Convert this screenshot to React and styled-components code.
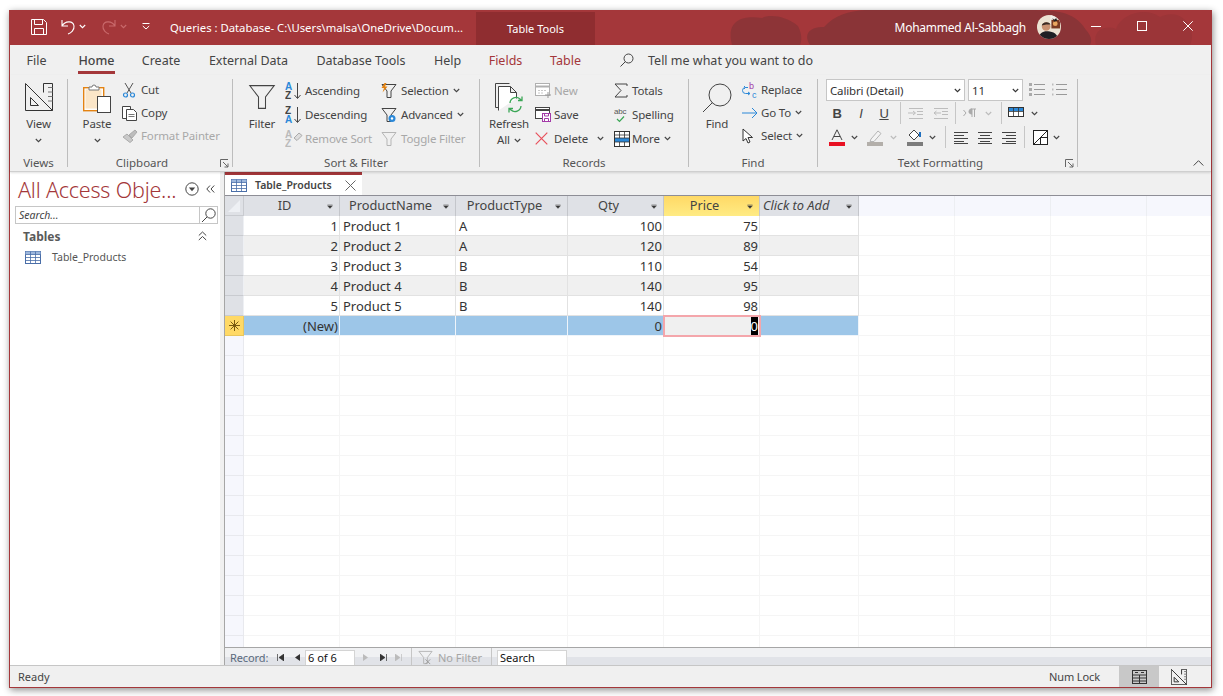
import React from 'react';
import styled, { createGlobalStyle } from 'styled-components';

const GlobalStyle = createGlobalStyle`
  html, body {
    margin: 0;
    padding: 0;
    background: #fff;
    font-family: "Noto Sans", "Open Sans", Arial, sans-serif;
    overflow: hidden;
  }
`;

const Shell = styled.div`
  padding: 10px 0 0 9px;
  height: 696px;
  box-sizing: border-box;
`;

const Window = styled.div`
  width: 1203px;
  height: 678px;
  box-sizing: border-box;
  border: 1px solid #a4373a;
  border-top: 0;
  box-shadow: 1px 2px 7px rgba(0, 0, 0, 0.45);
  display: flex;
  flex-direction: column;
  background: #f0f0f0;
`;

/* title bar */
const TitleBar = styled.div`
  position: relative;
  height: 35px;
  flex: none;
  background: #a4373a;
  color: #fff;
  display: flex;
  align-items: center;
  font-size: 12px;
  overflow: hidden;
`;

const TitleArt = styled.svg`
  position: absolute;
  left: 0;
  top: 0;
`;

const Quick = styled.div`
  position: relative;
  width: ${p => p.$w}px;
  margin-left: ${p => p.$ml || 0}px;
  height: 35px;
  flex: none;
  display: flex;
  align-items: center;
  justify-content: center;
  padding-bottom: ${p => p.$pb || 2}px;
  box-sizing: border-box;
`;

const DocTitle = styled.div`
  position: relative;
  margin-left: 20px;
  width: 298px;
  flex: none;
  font-size: 11.3px;
  white-space: nowrap;
`;

const ContextTab = styled.div`
  position: relative;
  margin-left: 8px;
  align-self: flex-end;
  height: 33px;
  width: 119px;
  flex: none;
  background: #8f2d30;
  display: flex;
  align-items: center;
  justify-content: center;
  font-size: 11px;
`;

const UserName = styled.div`
  position: relative;
  margin-left: auto;
  white-space: nowrap;
  letter-spacing: -0.25px;
`;

const Avatar = styled.svg`
  position: relative;
  margin: 0 0 2px 11px;
  flex: none;
`;

/* tabs */
const TabStrip = styled.div`
  height: 30px;
  flex: none;
  display: flex;
  align-items: center;
  font-size: 12.5px;
  color: #444;
`;

const Tab = styled.div`
  width: ${p => p.$w}px;
  flex: none;
  text-align: center;
  color: ${p => (p.$context ? '#a4373a' : '#444')};
`;

const TabText = styled.span`
  display: inline-block;
  line-height: 21px;
  padding-top: 2px;
  border-bottom: 3px solid ${p => (p.$active ? '#a4373a' : 'transparent')};
  margin-top: 1px;
  font-weight: ${p => (p.$active ? 500 : 400)};
`;

const TellMe = styled.div`
  display: flex;
  align-items: center;
  margin-left: 22px;
  gap: 14px;
`;

/* ribbon */
const Ribbon = styled.div`
  height: 97px;
  flex: none;
  box-sizing: border-box;
  padding-top: 4px;
  display: flex;
  border-bottom: 1px solid #cfcfcf;
  box-shadow: 0 1px 2px rgba(0, 0, 0, 0.12);
  position: relative;
  z-index: 1;
  font-size: 11.5px;
  letter-spacing: -0.15px;
  color: #444;
`;

const Group = styled.div`
  width: ${p => p.$w}px;
  height: 88px;
  flex: none;
  box-sizing: border-box;
  border-right: 1px solid #bdbdbd;
  display: flex;
  flex-direction: column;
`;

const GroupBody = styled.div`
  height: 70px;
  flex: none;
  display: flex;
  flex-direction: ${p => (p.$column ? 'column' : 'row')};
  padding-left: ${p => p.$pl || 0}px;
  justify-content: ${p => (p.$center ? 'center' : 'flex-start')};
`;

const GroupFoot = styled.div`
  position: relative;
  height: 13px;
  margin-top: 5px;
  flex: none;
  box-sizing: border-box;
  padding-right: ${p => p.$pr || 0}px;
  text-align: center;
  font-size: 11.5px;
  letter-spacing: 0;
  line-height: 18px;
  color: #555;
`;

const Launcher = styled.svg`
  position: absolute;
  right: 3px;
  top: 5px;
`;

const Large = styled.div`
  width: 46px;
  flex: none;
  margin-left: ${p => p.$ml || 0}px;
  display: flex;
  flex-direction: column;
  align-items: center;
  padding-top: 4px;
  line-height: 16px;
`;

const LargeIcon = styled.div`
  height: 33px;
  display: flex;
  align-items: flex-start;
`;

const LargeChev = styled.div`
  height: 16px;
  display: flex;
  align-items: center;
  gap: 4px;
`;

const SmallColumn = styled.div`
  width: ${p => p.$w}px;
  margin-left: ${p => p.$ml || 0}px;
  flex: none;
`;

const SmallRow = styled.div`
  height: ${p => p.$h || 24}px;
  padding-bottom: ${p => p.$pb || 1}px;
  box-sizing: border-box;
  display: flex;
  align-items: center;
  white-space: nowrap;
  color: ${p => (p.$off ? '#a8a8a8' : '#444')};
`;

const SmallIcon = styled.div`
  width: ${p => p.$w || 20}px;
  flex: none;
  display: flex;
  align-items: center;
`;

const After = styled.span`
  display: inline-flex;
  margin-left: ${p => p.$ml || 4}px;
`;

const FormatRow = styled.div`
  display: flex;
  align-items: center;
  height: ${p => p.$h || 24}px;
`;

const Combo = styled.div`
  width: ${p => p.$w}px;
  height: 22px;
  margin-right: 3px;
  box-sizing: border-box;
  border: 1px solid #c6c6c6;
  background: #fff;
  display: flex;
  align-items: center;
  justify-content: space-between;
  padding: 0 3px;
  color: #333;
  flex: none;
`;

const Tool = styled.div`
  width: ${p => p.$w}px;
  margin-left: ${p => p.$ml || 0}px;
  height: 22px;
  flex: none;
  display: flex;
  align-items: center;
  justify-content: center;
  color: ${p => p.$color || '#444'};
  font-size: 13px;
  font-family: "Liberation Sans", Arial, sans-serif;
  font-weight: ${p => (p.$bold ? 700 : 400)};
  font-style: ${p => (p.$italic ? 'italic' : 'normal')};
  text-decoration: ${p => (p.$under ? 'underline' : 'none')};
`;

const ToolSep = styled.div`
  width: 1px;
  height: 22px;
  flex: none;
  margin-left: ${p => p.$ml || 0}px;
  background: #c6c6c6;
`;

const CollapseArrow = styled.div`
  margin: auto 7px 5px auto;
`;

/* work area */
const Work = styled.div`
  flex: 1;
  min-height: 0;
  display: flex;
`;

const NavPane = styled.div`
  width: 210px;
  flex: none;
  background: #fff;
  margin-right: 4px;
  display: flex;
  flex-direction: column;
`;

const NavHead = styled.div`
  height: 34px;
  flex: none;
  display: flex;
  align-items: center;
  padding-left: 8px;
  box-sizing: border-box;
`;

const NavTitle = styled.div`
  width: 165px;
  font-size: 21.5px;
  font-weight: 300;
  color: #a4373a;
  white-space: nowrap;
  letter-spacing: -0.2px;
`;

const NavIcons = styled.div`
  display: flex;
  align-items: center;
  margin-left: 2px;
  gap: 7px;
`;

const NavSearch = styled.div`
  margin-left: 5px;
  width: 203px;
  height: 18px;
  flex: none;
  box-sizing: border-box;
  border: 1px solid #c6c6c6;
  display: flex;
  align-items: center;
  justify-content: space-between;
  font-size: 10.5px;
  font-style: italic;
  color: #444;
  padding-left: 3px;
`;

const NavSearchBtn = styled.div`
  width: 17px;
  height: 16px;
  border-left: 1px solid #c6c6c6;
  display: flex;
  align-items: center;
  justify-content: center;
`;

const NavSection = styled.div`
  display: flex;
  align-items: center;
  justify-content: space-between;
  margin-top: 3px;
  height: 18px;
  padding: 0 13px 0 13px;
  font-size: 12px;
  font-weight: 700;
  color: #5a5a5a;
`;

const NavItem = styled.div`
  display: flex;
  align-items: center;
  margin-top: 2px;
  height: 20px;
  padding-left: 15px;
  gap: 11px;
  font-size: 10.5px;
  color: #555;
`;

const Pane = styled.div`
  flex: 1;
  min-width: 0;
  border-left: 1px solid #a6a6a6;
  display: flex;
  flex-direction: column;
`;

const ObjectTabs = styled.div`
  height: 23px;
  flex: none;
  display: flex;
  border-bottom: 1px solid #8e8e96;
`;

const ObjectTab = styled.div`
  width: 137px;
  height: 23px;
  box-sizing: border-box;
  background: #fff;
  border-top: 3px solid #a4373a;
  display: flex;
  align-items: center;
  padding: 0 6px;
  font-size: 10.5px;
  font-weight: 600;
  color: #444;
`;

const ObjectTabName = styled.span`
  margin-left: 8px;
  flex: 1;
`;

/* datasheet */
const Sheet = styled.div`
  flex: 1;
  min-height: 0;
  overflow: hidden;
  background: #fff;
`;

const Row = styled.div`
  display: grid;
  grid-template-columns: 19px 96px 116px 112px 96px 96px 99px 96px 96px 96px 64px;
  height: 20px;
`;

const rowColors = {
  head: { bg: '#dfe1e6', line: '#c9cbd0' },
  white: { bg: '#fff', line: '#e2e2e2' },
  alt: { bg: '#f0f0f0', line: '#e2e2e2' },
  fresh: { bg: '#9dc6e8', line: '#eef4fa' },
  blank: { bg: '#fff', line: '#f5f5f5' },
};

const Cell = styled.div`
  box-sizing: border-box;
  height: 20px;
  line-height: 20px;
  font-size: 13px;
  color: #333;
  white-space: nowrap;
  overflow: hidden;
  padding: ${p => (p.$right ? '0 1px 0 0' : '0 0 0 3px')};
  text-align: ${p => (p.$right ? 'right' : 'left')};
  background: ${p => rowColors[p.$tone].bg};
  border-right: 1px solid ${p => rowColors[p.$tone].line};
  border-bottom: 1px solid ${p => rowColors[p.$tone].line};
`;

const EditCell = styled(Cell)`
  background: #f0f0f0;
  outline: 2px solid #f4a6ab;
  outline-offset: -1px;
  position: relative;
  z-index: 1;
`;

const Caret = styled.span`
  background: #000;
  color: #fff;
`;

const Selector = styled.div`
  box-sizing: border-box;
  height: 20px;
  background: ${p => p.$bg || '#dfe1e6'};
  border-right: 1px solid ${p => p.$line || '#eef0f4'};
  border-bottom: 1px solid ${p => p.$line || '#c9cbd0'};
  display: flex;
  align-items: center;
  justify-content: center;
`;

const Head = styled.div`
  box-sizing: border-box;
  height: 20px;
  display: flex;
  align-items: center;
  justify-content: ${p => (p.$left ? 'flex-start' : 'center')};
  position: relative;
  padding: ${p => (p.$left ? '0 0 2px 3px' : '0 14px 2px 0')};
  background: ${p => (p.$hot ? 'linear-gradient(#ffd966, #ffeb84)' : '#dfe1e6')};
  border-right: 1px solid #c4c6cb;
  font-size: 12.8px;
  color: #444;
  font-style: ${p => (p.$left ? 'italic' : 'normal')};
  white-space: nowrap;
`;

const HeadArrow = styled.svg`
  position: absolute;
  right: 6px;
  top: 8px;
`;

const HeadBlank = styled.div`
  background: #f6f7fd;
  border-right: 1px solid #eceef2;
`;

/* record navigator */
const RecordBar = styled.div`
  height: 17px;
  flex: none;
  border-top: 1px solid #a6a6a6;
  background: linear-gradient(#f0f1f3 50%, #e1e3e8 50%);
  display: flex;
  align-items: center;
  font-size: 11px;
  color: #5a6a7d;
  padding-left: 5px;
`;

const RecordLabel = styled.span`
  width: 39px;
  padding-top: 2px;
  white-space: nowrap;
  letter-spacing: -0.1px;
`;

const NavGlyph = styled.div`
  width: ${p => p.$w}px;
  flex: none;
  display: flex;
  justify-content: center;
  padding-top: 1px;
`;

const RecordBox = styled.div`
  width: ${p => p.$w}px;
  height: 15px;
  flex: none;
  margin-left: ${p => p.$ml || 0}px;
  box-sizing: border-box;
  background: #fff;
  border: 1px solid #d4d4d4;
  border-bottom: 0;
  padding-left: 2px;
  line-height: 14px;
  color: #111;
  align-self: flex-end;
`;

const RecordSep = styled.div`
  width: 1px;
  height: 17px;
  flex: none;
  margin-left: ${p => p.$ml || 0}px;
  background: #c6c6c6;
`;

const NoFilter = styled.div`
  display: flex;
  align-items: center;
  gap: 5px;
  margin-left: 6px;
  width: 73px;
  padding-top: 2px;
  box-sizing: border-box;
  color: #a6a6a6;
`;

/* status bar */
const StatusBar = styled.div`
  height: 21px;
  flex: none;
  border-top: 1px solid #c6c6c6;
  display: flex;
  align-items: center;
  font-size: 11px;
  color: #444;
  padding-left: 8px;
`;

const NumLock = styled.div`
  margin-left: auto;
  margin-right: 19px;
  letter-spacing: -0.1px;
`;

const ViewBtn = styled.div`
  width: 40px;
  height: 21px;
  flex: none;
  display: flex;
  align-items: center;
  justify-content: center;
  background: ${p => (p.$on ? '#c8c8c8' : 'transparent')};
`;

const StatusTail = styled.div`
  width: 12px;
  flex: none;
`;

const Ico = styled.svg`
  display: block;
  flex: none;
`;

const Chev = ({ c = '#444', w = 7 }) => (
  <Ico width={w} height="5" viewBox="0 0 7 5"><path d="M.8 1l2.7 2.7L6.2 1" fill="none" stroke={c} strokeWidth="1.1" /></Ico>
);

const Funnel = ({ s = 16, c = '#444', children }) => (
  <Ico width={s} height={s} viewBox="0 0 16 16">
    <path d="M1 1.5h14L10 8v6.5H6V8z" fill="none" stroke={c} strokeWidth={s > 20 ? 0.6 : 1} />
    {children}
  </Ico>
);

const GridIcon = ({ c = '#4a6ea8' }) => (
  <Ico width="16" height="13" viewBox="0 0 16 13">
    <rect x=".5" y=".5" width="15" height="12" fill="#fff" stroke={c} />
    <path d="M.5 .5h15v3h-15z" fill="#9db7dc" />
    <path d="M.5 3.5h15M.5 6.5h15M.5 9.5h15M5.5 .5v12M10.5 .5v12" stroke={c} strokeWidth=".8" fill="none" />
  </Ico>
);

const GroupLauncher = () => (
  <Launcher width="9" height="9" viewBox="0 0 9 9">
    <path d="M.5 8V.5H8M3 3l5 5M8 4.5V8H4.5" fill="none" stroke="#666" />
  </Launcher>
);

const ViewIcon = ({ s = 28, sw = 1 }) => (
  <Ico width={s} height={s} viewBox="0 0 28 28">
    <path d="M.5 .5l27 27H.5z" fill="none" stroke="#333" strokeWidth={sw} />
    <path d="M5.5 14.5l8 8h-8z" fill="none" stroke="#333" strokeWidth={sw} />
    <path d="M18.5 9.5V.5h9v27" fill="none" stroke="#333" strokeWidth={sw} />
    <path d="M23 4.5h4.5M23 9h4.5M23 13.5h4.5M23 18h4.5" stroke="#777" strokeWidth={sw} />
  </Ico>
);

const PasteIcon = () => (
  <Ico width="28" height="30" viewBox="0 0 28 30">
    <rect x=".7" y="4.7" width="20" height="23" fill="#fff" stroke="#e48312" strokeWidth="1.4" />
    <rect x="2.5" y="6.5" width="16" height="19" fill="#fbe6c8" />
    <path d="M6 6V4h3a2 2 0 0 1 4 0h3v3H6z" fill="#fff" stroke="#777" />
    <rect x="14.5" y="13.5" width="13" height="16" fill="#fff" stroke="#444" />
  </Ico>
);

const CutIcon = () => (
  <Ico width="14" height="16" viewBox="0 0 14 16">
    <path d="M3 1l6 10M11 1L5 11" stroke="#555" strokeWidth="1" fill="none" />
    <circle cx="3.5" cy="13" r="2" fill="none" stroke="#2b88d8" strokeWidth="1.2" />
    <circle cx="10.5" cy="13" r="2" fill="none" stroke="#2b88d8" strokeWidth="1.2" />
  </Ico>
);

const CopyIcon = () => (
  <Ico width="16" height="16" viewBox="0 0 16 16">
    <path d="M4.5 13.5h-4v-12h8v3" fill="#fff" stroke="#444" />
    <path d="M4.5 4.5h7l3 3v8h-10z" fill="#fff" stroke="#444" />
    <path d="M6.5 9.5h6M6.5 11.5h6" stroke="#777" />
  </Ico>
);

const PainterIcon = () => (
  <Ico width="16" height="14" viewBox="0 0 16 14">
    <path d="M1 8l4-3 6 6-3 2.5z" fill="#c9c9c9" stroke="#aaa" />
    <path d="M7 6l6-5 2 2-5 6z" fill="#bdbdbd" stroke="#aaa" />
  </Ico>
);

const SortText = styled.text`
  font-family: "Liberation Sans", Arial, sans-serif;
  font-weight: 700;
  font-size: 10px;
`;

const SortIcon = ({ top, bottom, topColor, bottomColor, off, arrow = true }) => (
  <Ico width="19" height="18" viewBox="0 0 19 18">
    <SortText x="0" y="8" fill={topColor}>{top}</SortText>
    <SortText x="0" y="17" fill={bottomColor}>{bottom}</SortText>
    {arrow ? <path d="M12.5 1v15M9.5 13l3 3.5 3-3.5" stroke="#444" fill="none" /> : null}
    {off ? <path d="M9 8l5-5 3 2.5-5 5z" fill="#ddd" stroke="#aaa" /> : null}
  </Ico>
);

const RefreshIcon = () => (
  <Ico width="28" height="31" viewBox="0 0 28 31">
    <path d="M4.5 24.5H.5V.5h14" fill="none" stroke="#444" />
    <path d="M3.5 27.5V3.5h12l6 6v6M15.5 3.5v6h6" fill="#fff" stroke="#444" />
    <path d="M15 20a6 6 0 0 1 10-4l1.5 1.5M27 13.5v4h-4M26 23a6 6 0 0 1-10 4l-1.5-1.5M14 29.5v-4h4" fill="none" stroke="#3aa655" strokeWidth="1.3" />
  </Ico>
);

const NewRecIcon = () => (
  <Ico width="17" height="15" viewBox="0 0 17 15">
    <rect x=".5" y=".5" width="14" height="12" fill="#fff" stroke="#b0b0b0" />
    <path d="M.5 3.5h14" stroke="#b0b0b0" strokeWidth="2" />
    <path d="M3 7.5h8M3 10h5" stroke="#c8c8c8" strokeDasharray="2 1" />
    <path d="M13 9v6M10 12h6" stroke="#999" />
  </Ico>
);

const SaveRecIcon = () => (
  <Ico width="17" height="15" viewBox="0 0 17 15">
    <rect x=".5" y=".5" width="14" height="11" fill="#fff" stroke="#444" />
    <path d="M.5 3h14" stroke="#444" strokeWidth="2" />
    <rect x="7.5" y="6.5" width="8" height="8" fill="#fff" stroke="#a33ba8" />
    <path d="M9.5 6.5v2.5h4V6.5M9.5 14.5v-3h4v3" fill="none" stroke="#a33ba8" />
  </Ico>
);

const SigmaIcon = () => (
  <Ico width="14" height="15" viewBox="0 0 14 15">
    <path d="M13 3V1H1l6 6.5L1 14h12v-2" fill="none" stroke="#444" />
  </Ico>
);

const SpellIcon = () => (
  <Ico width="16" height="16" viewBox="0 0 16 16">
    <text x="0" y="7" fontSize="8" fontFamily="Liberation Sans, sans-serif" fill="#555">abc</text>
    <path d="M3 12l2.5 2.5L10 9.5" fill="none" stroke="#3aa655" strokeWidth="1.2" />
  </Ico>
);

const MoreIcon = () => (
  <Ico width="16" height="16" viewBox="0 0 16 16">
    <rect x=".5" y=".5" width="15" height="15" fill="#fff" stroke="#333" />
    <rect x="1" y="7" width="14" height="4" fill="#2b88d8" />
    <path d="M.5 4h15M.5 7h15M.5 11h15M5.5 .5V7M10.5 .5V7M5.5 11v4.5M10.5 11v4.5" stroke="#333" strokeWidth=".8" fill="none" />
  </Ico>
);

const FindIcon = () => (
  <Ico width="30" height="30" viewBox="0 0 30 30">
    <circle cx="18" cy="12" r="11" fill="none" stroke="#444" />
    <path d="M1 29l9.5-9.5" stroke="#444" />
  </Ico>
);

const ReplaceIcon = () => (
  <Ico width="16" height="16" viewBox="0 0 16 16">
    <text x="7" y="7" fontSize="9" fontFamily="Liberation Sans, sans-serif" fill="#a33ba8">b</text>
    <text x="10" y="15.5" fontSize="9" fontFamily="Liberation Sans, sans-serif" fill="#2b88d8">c</text>
    <path d="M6 5.5H3.5a2.5 2.5 0 0 0 0 6H8M2 4l1.5 1.5L2 7M6 10l2 1.5L6 13" fill="none" stroke="#2b88d8" />
  </Ico>
);

const GoToIcon = () => (
  <Ico width="16" height="12" viewBox="0 0 16 12">
    <path d="M0 6h15M10 1l5 5-5 5" fill="none" stroke="#2b88d8" />
  </Ico>
);

const SelectIcon = () => (
  <Ico width="12" height="16" viewBox="0 0 12 16">
    <path d="M1 1v12l3-2.5 2 4.5 2-1-2-4.5h4.5z" fill="#fff" stroke="#333" />
  </Ico>
);

const BulletIcon = ({ numbered }) => (
  <Ico width="16" height="14" viewBox="0 0 16 14">
    {numbered ? (
      <path d="M1 1.5h2M1 6.5h2M1 11.5h2" stroke="#bbb" strokeWidth="2" strokeDasharray="1 .5" />
    ) : (
      <path d="M0 1.5h3M0 6.5h3M0 11.5h3" stroke="#aaa" strokeWidth="3" />
    )}
    <path d="M5 1.5h11M5 6.5h11M5 11.5h11" stroke="#999" />
  </Ico>
);

const IndentIcon = ({ back }) => (
  <Ico width="15" height="11" viewBox="0 0 15 11">
    <path d="M1 .5h14M9 3.5h6M9 6.5h6M1 10.5h14" stroke="#bdbdbd" />
    <path d={back ? 'M8 5H1M3.5 3L1 5l2.5 2' : 'M0 5h7M5 3l2.5 2L5 7'} stroke="#bdbdbd" fill="none" />
  </Ico>
);

const ParaIcon = () => (
  <Ico width="13" height="10" viewBox="0 0 13 10">
    <path d="M.5 2l2.5 3-2.5 3" fill="none" stroke="#aaa" />
    <path d="M8 1h5M9 1v8M11.5 1v8M9 1a2.5 2.5 0 0 0-1 5h1" fill="#aaa" stroke="#aaa" />
  </Ico>
);

const GridlineIcon = () => (
  <Ico width="16" height="12" viewBox="0 0 16 12">
    <rect x=".5" y=".5" width="15" height="9" fill="#fff" stroke="#333" />
    <rect x="1" y="1" width="14" height="3" fill="#2b88d8" />
    <path d="M5.5 .5v9M10.5 .5v9M.5 4.5h15" stroke="#333" strokeWidth=".8" />
  </Ico>
);

const TextColorIcon = () => (
  <Ico width="16" height="17" viewBox="0 0 16 17">
    <path d="M3 11L8 .8 13 11M5 7.5h6" fill="none" stroke="#444" />
    <rect x="0" y="13" width="16" height="4" fill="#e81123" />
  </Ico>
);

const HighlightIcon = () => (
  <Ico width="16" height="17" viewBox="0 0 16 17">
    <path d="M4 10L11 2l3 2.5-7 8H3z" fill="#f4f4f4" stroke="#b5b5b5" />
    <rect x="0" y="13" width="16" height="4" fill="#b3afaa" />
  </Ico>
);

const FillIcon = () => (
  <Ico width="16" height="17" viewBox="0 0 16 17">
    <path d="M7 1l5 5-5 5-5-5z" fill="#fff" stroke="#444" />
    <path d="M13 3v5" stroke="#1f6fbf" strokeWidth="2" />
    <rect x="0" y="13" width="16" height="4" fill="#7c7c7c" />
  </Ico>
);

const AlignIcon = ({ side }) => {
  const short = side === 'left' ? 'M0 4.5h10M0 10.5h10' : side === 'right' ? 'M4 4.5h10M4 10.5h10' : 'M2 4.5h10M2 10.5h10';
  return (
    <Ico width="14" height="13" viewBox="0 0 14 13">
      <path d={`M0 1.5h14M0 7.5h14M0 12.5h14 ${short}`} stroke="#444" fill="none" />
    </Ico>
  );
};

const BorderIcon = () => (
  <Ico width="15" height="15" viewBox="0 0 15 15">
    <rect x=".5" y=".5" width="14" height="14" fill="#fff" stroke="#222" />
    <path d="M.5 14.5l14-14M7.5 14.5v-7h7" fill="none" stroke="#222" />
  </Ico>
);

const WinMin = () => <Ico width="10" height="10" viewBox="0 0 10 10"><path d="M0 5.5h10" stroke="#fff" /></Ico>;
const WinMax = () => <Ico width="10" height="10" viewBox="0 0 10 10"><rect x=".5" y=".5" width="9" height="9" fill="none" stroke="#fff" /></Ico>;
const WinClose = () => <Ico width="10" height="10" viewBox="0 0 10 10"><path d="M.3 .3l9.4 9.4M9.7 .3L.3 9.7" stroke="#fff" /></Ico>;

const Triangle = ({ dir = 'right', c = '#444' }) => (
  <Ico width="5" height="7" viewBox="0 0 5 7">
    <path d={dir === 'right' ? 'M0 0l5 3.5L0 7z' : 'M5 0L0 3.5 5 7z'} fill={c} />
  </Ico>
);

const EndMark = ({ dir, c }) => (
  <Ico width="7" height="7" viewBox="0 0 7 7">
    {dir === 'left' ? <path d="M.5 0v7M7 0L2 3.5 7 7z" fill={c} stroke={c} strokeWidth=".7" /> : <path d="M6.5 0v7M0 0l5 3.5L0 7z" fill={c} stroke={c} strokeWidth=".7" />}
  </Ico>
);

const rows = [
  [1, 'Product 1', 'A', 100, 75],
  [2, 'Product 2', 'A', 120, 89],
  [3, 'Product 3', 'B', 110, 54],
  [4, 'Product 4', 'B', 140, 95],
  [5, 'Product 5', 'B', 140, 98],
];

const heads = ['ID', 'ProductName', 'ProductType', 'Qty'];
const blankRows = Array.from({ length: 16 }, (_, i) => i);
const blankCols = Array.from({ length: 10 }, (_, i) => i);

const HeaderArrow = () => (
  <HeadArrow width="6" height="5" viewBox="0 0 7 5">
    <path d="M.5 .3h6M.5 1.5h6L3.5 4.8z" fill="#333" stroke="#555" strokeWidth=".4" />
  </HeadArrow>
);

export default function App() {
  return (
    <Shell>
      <GlobalStyle />
      <Window>
        <TitleBar>
          <TitleArt width="1201" height="35" viewBox="0 0 1201 35">
            <path d="M722 35C716 12 730 5 752 8c8-4 24-2 36 8 4 8 4 14 2 19z" fill="#8d3437" />
            <path d="M800 35c-8-12 2-19 14-18 16-18 40-18 70-17h130c30 0 50 0 62 20 6 7 6 11 4 15z" fill="#8a3437" />
            <path d="M1086 35c-4-16 10-20 20-16 6-16 30-22 44-12 8-4 18-4 24 2 8 8 10 18 6 26z" fill="#9b3538" />
          </TitleArt>
          <Quick $w={16} $ml={21}>
            <Ico width="16" height="16" viewBox="0 0 16 16">
              <path d="M.5 .5h12l3 3v12H.5zM3.5 .5v5h8v-5M3.5 15.5v-6h9v6" fill="none" stroke="#fff" />
            </Ico>
          </Quick>
          <Quick $w={18} $ml={12}>
            <Ico width="16" height="16" viewBox="0 0 16 16">
              <path d="M2 1v6h6M2 7c3-5 11-6 12 0 .5 4-3 7-6 8" fill="none" stroke="#fff" strokeWidth="1.1" />
            </Ico>
          </Quick>
          <Quick $w={7} $ml={2}><Chev c="#fff" /></Quick>
          <Quick $w={18} $ml={14}>
            <Ico width="16" height="16" viewBox="0 0 16 16">
              <path d="M14 1v6H8M14 7C11 2 3 1 2 7c-.5 4 3 7 6 8" fill="none" stroke="#c96a6c" strokeWidth="1.1" />
            </Ico>
          </Quick>
          <Quick $w={7} $ml={2}><Chev c="#c96a6c" /></Quick>
          <Quick $w={9} $ml={14}>
            <Ico width="8" height="7" viewBox="0 0 8 7">
              <path d="M.5 .5h7M.8 3l3.2 3 3.2-3" fill="none" stroke="#fff" />
            </Ico>
          </Quick>
          <DocTitle>Queries : Database- C:\Users\malsa\OneDrive\Docum...</DocTitle>
          <ContextTab>Table Tools</ContextTab>
          <UserName>Mohammed Al-Sabbagh</UserName>
          <Avatar width="24" height="24" viewBox="0 0 25 25">
            <defs><clipPath id="av"><circle cx="12.5" cy="12.5" r="12.5" /></clipPath></defs>
            <g clipPath="url(#av)">
              <rect width="25" height="25" fill="#ece3d3" />
              <rect x="14" y="0" width="11" height="9" fill="#f2efe9" />
              <rect x="15" y="5" width="9" height="9" fill="#7a3b22" />
              <circle cx="19" cy="9" r="2.5" fill="#e9a860" />
              <path d="M16 3l2 2 2-2 1 3-3 1z" fill="#222" />
              <circle cx="9.5" cy="12" r="4.5" fill="#c99272" />
              <path d="M5 11c0-4 8-5 9-1-3 0-6 0-9 1z" fill="#3a2b25" />
              <path d="M2 25c0-6 4-8 8-8s11 1 12 8z" fill="#1e1f24" />
            </g>
          </Avatar>
          <Quick $w={46} $ml={12} $pb={3}><WinMin /></Quick>
          <Quick $w={46} $pb={3}><WinMax /></Quick>
          <Quick $w={46} $pb={3}><WinClose /></Quick>
        </TitleBar>

        <TabStrip>
          <Tab $w={53}><TabText>File</TabText></Tab>
          <Tab $w={67}><TabText $active>Home</TabText></Tab>
          <Tab $w={62}><TabText>Create</TabText></Tab>
          <Tab $w={113}><TabText>External Data</TabText></Tab>
          <Tab $w={112}><TabText>Database Tools</TabText></Tab>
          <Tab $w={61}><TabText>Help</TabText></Tab>
          <Tab $w={55} $context><TabText>Fields</TabText></Tab>
          <Tab $w={65} $context><TabText>Table</TabText></Tab>
          <TellMe>
            <Ico width="14" height="14" viewBox="0 0 14 14">
              <circle cx="8.5" cy="5.5" r="4.5" fill="none" stroke="#444" />
              <path d="M.5 13.5l5-5" stroke="#444" />
            </Ico>
            Tell me what you want to do
          </TellMe>
        </TabStrip>

        <Ribbon>
          <Group $w={58}>
            <GroupBody $center>
              <Large>
                <LargeIcon><ViewIcon /></LargeIcon>
                View
                <LargeChev><Chev /></LargeChev>
              </Large>
            </GroupBody>
            <GroupFoot>Views</GroupFoot>
          </Group>

          <Group $w={165}>
            <GroupBody>
              <Large $ml={6}>
                <LargeIcon><PasteIcon /></LargeIcon>
                Paste
                <LargeChev><Chev /></LargeChev>
              </Large>
              <SmallColumn $w={110} $ml={2}>
                <SmallRow $h={23} $pb={2}><SmallIcon $w={19}><CutIcon /></SmallIcon>Cut</SmallRow>
                <SmallRow $h={23} $pb={2}><SmallIcon $w={19}><CopyIcon /></SmallIcon>Copy</SmallRow>
                <SmallRow $h={23} $pb={2} $off><SmallIcon $w={19}><PainterIcon /></SmallIcon>Format Painter</SmallRow>
              </SmallColumn>
            </GroupBody>
            <GroupFoot $pr={16}>Clipboard<GroupLauncher /></GroupFoot>
          </Group>

          <Group $w={247}>
            <GroupBody>
              <Large $ml={6}>
                <LargeIcon><Funnel s={28} /></LargeIcon>
                Filter
              </Large>
              <SmallColumn $w={96}>
                <SmallRow><SmallIcon><SortIcon top="A" bottom="Z" topColor="#2b88d8" bottomColor="#444" /></SmallIcon>Ascending</SmallRow>
                <SmallRow><SmallIcon><SortIcon top="Z" bottom="A" topColor="#444" bottomColor="#2b88d8" /></SmallIcon>Descending</SmallRow>
                <SmallRow $off><SmallIcon><SortIcon top="A" bottom="Z" topColor="#bbb" bottomColor="#bbb" arrow={false} off /></SmallIcon>Remove Sort</SmallRow>
              </SmallColumn>
              <SmallColumn $w={90}>
                <SmallRow>
                  <SmallIcon>
                    <Funnel><path d="M3.5 0L.5 5h2.5L1.5 9.5 6.5 3.5H4L5.5 0z" fill="#e48312" /></Funnel>
                  </SmallIcon>
                  Selection<After><Chev /></After>
                </SmallRow>
                <SmallRow>
                  <SmallIcon>
                    <Funnel><circle cx="11" cy="11.5" r="3.5" fill="#2b88d8" /><circle cx="11" cy="11.5" r="1.2" fill="#fff" /></Funnel>
                  </SmallIcon>
                  Advanced<After><Chev /></After>
                </SmallRow>
                <SmallRow $off><SmallIcon><Funnel c="#b5b5b5" /></SmallIcon>Toggle Filter</SmallRow>
              </SmallColumn>
            </GroupBody>
            <GroupFoot>Sort &amp; Filter</GroupFoot>
          </Group>

          <Group $w={209}>
            <GroupBody>
              <Large $ml={6}>
                <LargeIcon><RefreshIcon /></LargeIcon>
                Refresh
                <LargeChev>All <Chev /></LargeChev>
              </Large>
              <SmallColumn $w={79} $ml={3}>
                <SmallRow $off><SmallIcon $w={19}><NewRecIcon /></SmallIcon>New</SmallRow>
                <SmallRow><SmallIcon $w={19}><SaveRecIcon /></SmallIcon>Save</SmallRow>
                <SmallRow>
                  <SmallIcon $w={19}>
                    <Ico width="13" height="13" viewBox="0 0 13 13"><path d="M.7 .7l11.6 11.6M12.3 .7L.7 12.3" stroke="#e8505b" strokeWidth="1.2" /></Ico>
                  </SmallIcon>
                  Delete<After $ml={9}><Chev /></After>
                </SmallRow>
              </SmallColumn>
              <SmallColumn $w={70}>
                <SmallRow><SmallIcon $w={18}><SigmaIcon /></SmallIcon>Totals</SmallRow>
                <SmallRow><SmallIcon $w={18}><SpellIcon /></SmallIcon>Spelling</SmallRow>
                <SmallRow><SmallIcon $w={18}><MoreIcon /></SmallIcon>More<After><Chev /></After></SmallRow>
              </SmallColumn>
            </GroupBody>
            <GroupFoot>Records</GroupFoot>
          </Group>

          <Group $w={129}>
            <GroupBody>
              <Large $ml={5}>
                <LargeIcon><FindIcon /></LargeIcon>
                Find
              </Large>
              <SmallColumn $w={76} $ml={2}>
                <SmallRow $h={23} $pb={2}><SmallIcon $w={19}><ReplaceIcon /></SmallIcon>Replace</SmallRow>
                <SmallRow $h={23} $pb={2}><SmallIcon $w={19}><GoToIcon /></SmallIcon>Go To<After><Chev /></After></SmallRow>
                <SmallRow $h={23} $pb={2}><SmallIcon $w={19}><SelectIcon /></SmallIcon>Select<After><Chev /></After></SmallRow>
              </SmallColumn>
            </GroupBody>
            <GroupFoot>Find</GroupFoot>
          </Group>

          <Group $w={260}>
            <GroupBody $pl={8} $column>
              <FormatRow $h={22}>
                <Combo $w={139}>Calibri (Detail)<Chev c="#333" /></Combo>
                <Combo $w={55}>11<Chev c="#333" /></Combo>
                <Tool $w={21}><BulletIcon /></Tool>
                <Tool $w={23}><BulletIcon numbered /></Tool>
              </FormatRow>
              <FormatRow>
                <Tool $w={22} $bold>B</Tool>
                <Tool $w={26} $italic>I</Tool>
                <Tool $w={20} $under>U</Tool>
                <ToolSep $ml={6} />
                <Tool $w={29}><IndentIcon /></Tool>
                <Tool $w={20}><IndentIcon back /></Tool>
                <ToolSep $ml={5} />
                <Tool $w={26}><ParaIcon /></Tool>
                <Tool $w={12}><Chev c="#bbb" /></Tool>
                <ToolSep $ml={7} />
                <Tool $w={28}><GridlineIcon /></Tool>
                <Tool $w={8}><Chev /></Tool>
              </FormatRow>
              <FormatRow>
                <Tool $w={22}><TextColorIcon /></Tool>
                <Tool $w={12}><Chev /></Tool>
                <Tool $w={30}><HighlightIcon /></Tool>
                <Tool $w={6}><Chev c="#bbb" /></Tool>
                <Tool $w={26} $ml={6}><FillIcon /></Tool>
                <Tool $w={8}><Chev /></Tool>
                <ToolSep $ml={9} />
                <Tool $w={30}><AlignIcon side="left" /></Tool>
                <Tool $w={18}><AlignIcon side="center" /></Tool>
                <Tool $w={30}><AlignIcon side="right" /></Tool>
                <ToolSep />
                <Tool $w={24} $ml={3}><BorderIcon /></Tool>
                <Tool $w={8}><Chev /></Tool>
              </FormatRow>
            </GroupBody>
            <GroupFoot $pr={14}>Text Formatting<GroupLauncher /></GroupFoot>
          </Group>

          <CollapseArrow>
            <Ico width="11" height="6" viewBox="0 0 11 6"><path d="M.7 5.5l4.8-4.8 4.8 4.8" fill="none" stroke="#444" /></Ico>
          </CollapseArrow>
        </Ribbon>

        <Work>
          <NavPane>
            <NavHead>
              <NavTitle>All Access Obje...</NavTitle>
              <NavIcons>
                <Ico width="14" height="14" viewBox="0 0 14 14">
                  <circle cx="7" cy="7" r="6.2" fill="none" stroke="#444" />
                  <path d="M3.8 5.5h6.4L7 9.3z" fill="#444" />
                </Ico>
                <Ico width="9" height="8" viewBox="0 0 9 8">
                  <path d="M4 .5L.8 4 4 7.5M8.2 .5L5 4l3.2 3.5" fill="none" stroke="#444" />
                </Ico>
              </NavIcons>
            </NavHead>
            <NavSearch>
              Search...
              <NavSearchBtn>
                <Ico width="15" height="15" viewBox="0 0 15 15">
                  <circle cx="9.5" cy="5.5" r="4.7" fill="none" stroke="#444" />
                  <path d="M1 14l5-5" stroke="#444" />
                </Ico>
              </NavSearchBtn>
            </NavSearch>
            <NavSection>
              Tables
              <Ico width="9" height="10" viewBox="0 0 9 10">
                <path d="M.8 4.5L4.5 1l3.7 3.5M.8 9L4.5 5.5 8.2 9" fill="none" stroke="#444" />
              </Ico>
            </NavSection>
            <NavItem><GridIcon />Table_Products</NavItem>
          </NavPane>

          <Pane>
            <ObjectTabs>
              <ObjectTab>
                <GridIcon />
                <ObjectTabName>Table_Products</ObjectTabName>
                <Ico width="11" height="11" viewBox="0 0 11 11">
                  <path d="M.5 .5l10 10M10.5 .5l-10 10" stroke="#666" />
                </Ico>
              </ObjectTab>
            </ObjectTabs>
            <Sheet>
              <Row>
                <Selector $line="#c9cbd0">
                  <Ico width="12" height="12" viewBox="0 0 12 12"><path d="M12 0v12H0z" fill="#eef0f4" /></Ico>
                </Selector>
                {heads.map(h => <Head key={h}>{h}<HeaderArrow /></Head>)}
                <Head $hot>Price<HeaderArrow /></Head>
                <Head $left>Click to Add<HeaderArrow /></Head>
                <HeadBlank />
                <HeadBlank />
                <HeadBlank />
                <HeadBlank />
              </Row>
              {rows.map((r, i) => {
                const tone = i % 2 === 0 ? 'white' : 'alt';
                return (
                  <Row key={r[0]}>
                    <Selector />
                    <Cell $tone={tone} $right>{r[0]}</Cell>
                    <Cell $tone={tone}>{r[1]}</Cell>
                    <Cell $tone={tone}>{r[2]}</Cell>
                    <Cell $tone={tone} $right>{r[3]}</Cell>
                    <Cell $tone={tone} $right>{r[4]}</Cell>
                    <Cell $tone={tone} />
                    <Cell $tone="blank" />
                    <Cell $tone="blank" />
                    <Cell $tone="blank" />
                    <Cell $tone="blank" />
                  </Row>
                );
              })}
              <Row>
                <Selector $bg="#ffd966" $line="#e9c65c">
                  <Ico width="11" height="11" viewBox="0 0 11 11">
                    <path d="M5.5 0v11M0 5.5h11M1.6 1.6l7.8 7.8M9.4 1.6L1.6 9.4" stroke="#7a5a10" />
                  </Ico>
                </Selector>
                <Cell $tone="fresh" $right>(New)</Cell>
                <Cell $tone="fresh" />
                <Cell $tone="fresh" />
                <Cell $tone="fresh" $right>0</Cell>
                <EditCell $tone="fresh" $right><Caret>0</Caret></EditCell>
                <Cell $tone="fresh" />
                <Cell $tone="blank" />
                <Cell $tone="blank" />
                <Cell $tone="blank" />
                <Cell $tone="blank" />
              </Row>
              {blankRows.map(i => (
                <Row key={i}>
                  <Selector $bg="#f6f7fd" $line="#e8e9ee" />
                  {blankCols.map(c => <Cell key={c} $tone="blank" />)}
                </Row>
              ))}
            </Sheet>
            <RecordBar>
              <RecordLabel>Record:</RecordLabel>
              <NavGlyph $w={22}><EndMark dir="left" c="#333" /></NavGlyph>
              <NavGlyph $w={12}><Triangle dir="left" c="#333" /></NavGlyph>
              <RecordBox $w={50} $ml={2}>6 of 6</RecordBox>
              <NavGlyph $w={20}><Triangle c="#bbb" /></NavGlyph>
              <NavGlyph $w={16}><EndMark dir="right" c="#333" /></NavGlyph>
              <NavGlyph $w={14}><EndMark dir="right" c="#bbb" /></NavGlyph>
              <RecordSep $ml={6} />
              <NoFilter>
                <Ico width="15" height="15" viewBox="0 0 16 16">
                  <path d="M1 1.5h14L10 8v6.5H6V8z" fill="none" stroke="#b5b5b5" />
                  <path d="M8 10l5 5M13 10l-5 5" stroke="#999" />
                </Ico>
                No Filter
              </NoFilter>
              <RecordSep />
              <RecordBox $w={70} $ml={5}>Search</RecordBox>
            </RecordBar>
          </Pane>
        </Work>

        <StatusBar>
          Ready
          <NumLock>Num Lock</NumLock>
          <ViewBtn $on>
            <Ico width="15" height="14" viewBox="0 0 15 14">
              <rect x=".5" y=".5" width="14" height="13" fill="none" stroke="#333" />
              <path d="M.5 5h14M.5 8h14M.5 11h14M7.5 5v8.5" stroke="#333" fill="none" />
              <path d="M3 2.5h3M9 2.5h3" stroke="#333" />
            </Ico>
          </ViewBtn>
          <ViewBtn><ViewIcon s={16} sw={1.7} /></ViewBtn>
          <StatusTail />
        </StatusBar>
      </Window>
    </Shell>
  );
}
